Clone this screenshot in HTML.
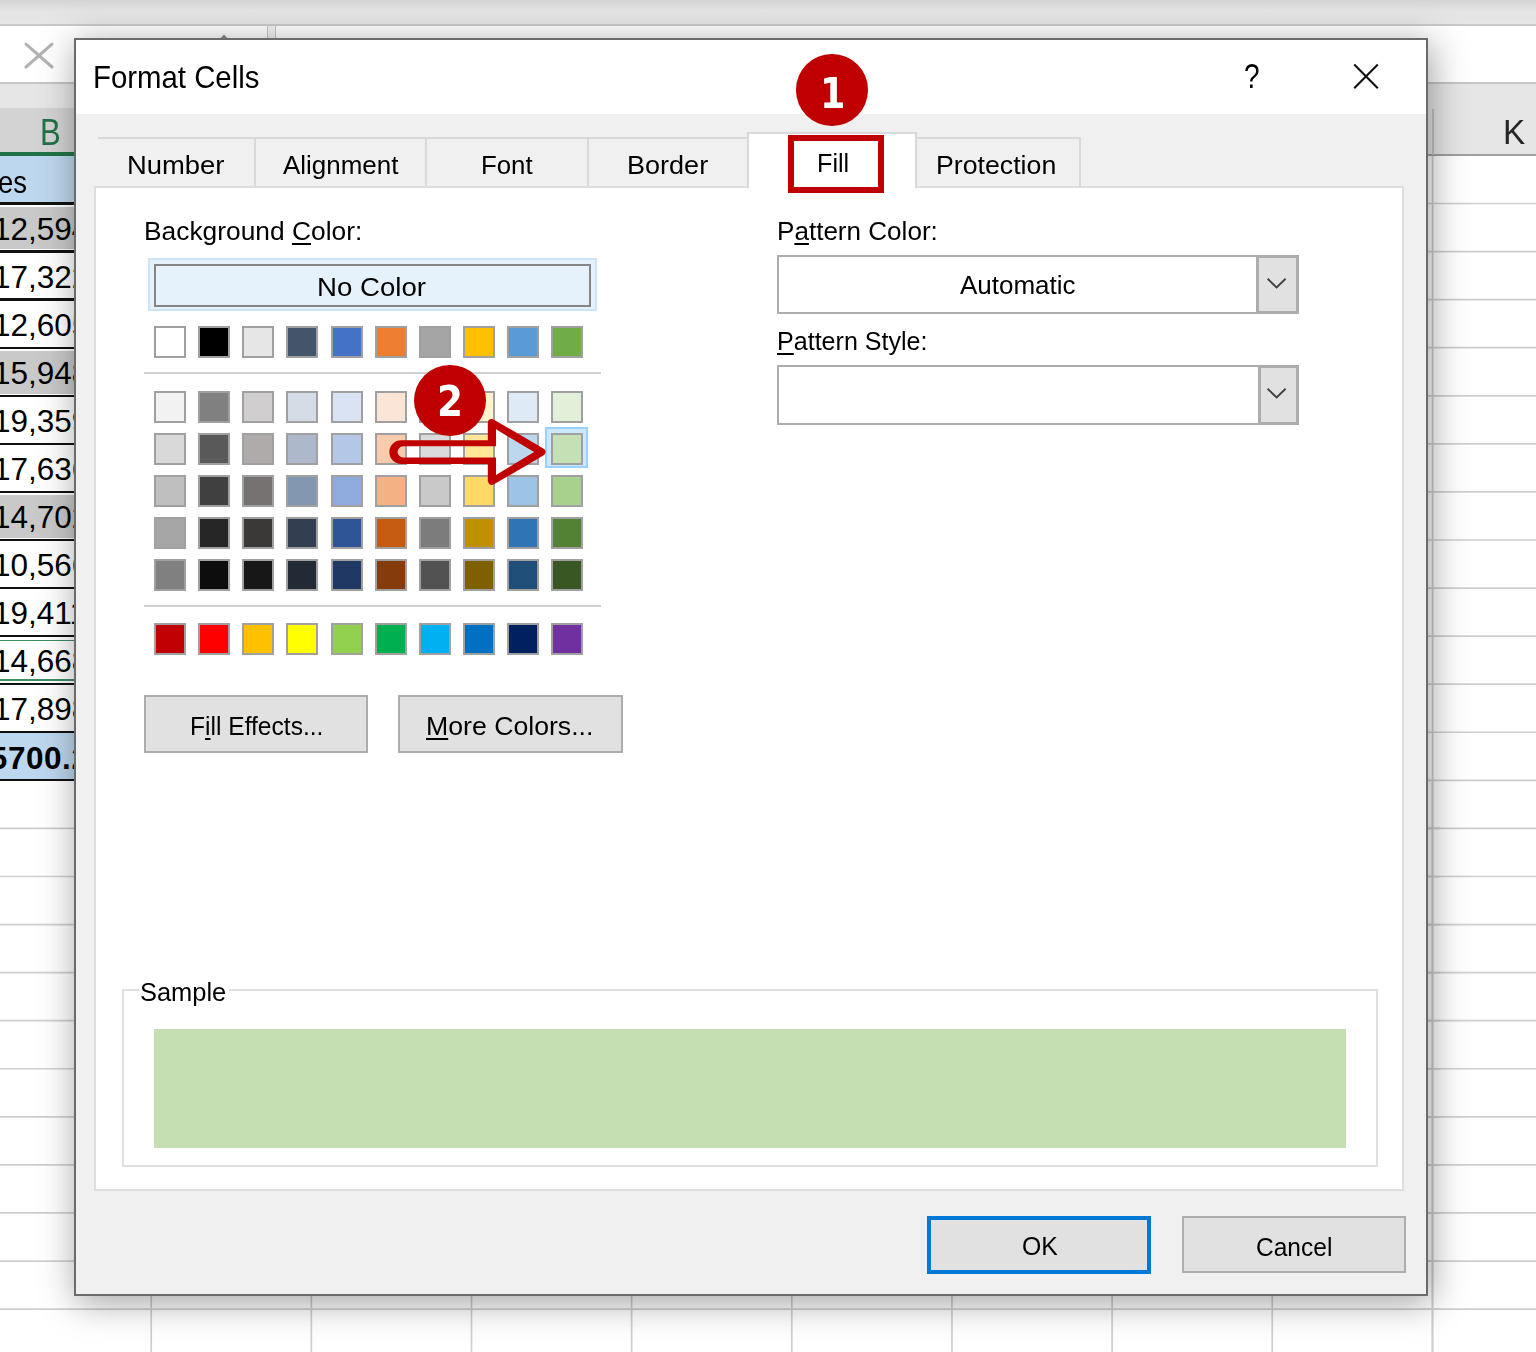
<!DOCTYPE html>
<html lang="en"><head><meta charset="utf-8"><title>Format Cells</title>
<style>
html,body{margin:0;padding:0}
body{width:1536px;height:1352px;position:relative;overflow:hidden;background:#fff;
 font-family:"Liberation Sans",sans-serif;color:#000}
.abs{position:absolute}
.tx{position:absolute;white-space:nowrap;transform-origin:0 0;display:block}
.tx u{text-decoration-thickness:2px;text-underline-offset:3px}
.gl{position:absolute;background:#d6d6d6}
.sw{position:absolute;width:28px;height:28px;border:2px solid #a0a0a0;display:block}
.btn{position:absolute;background:#e1e1e1;border:2px solid #adadad;box-sizing:border-box}
#dlg{position:absolute;left:74px;top:38px;width:1353.5px;height:1258px;box-sizing:border-box;
 border:2px solid #6b6b6b;background:#f0f0f0;box-shadow:3px 6px 34px 1px rgba(0,0,0,.36)}
</style></head><body>

<!-- ===== spreadsheet background ===== -->
<div class="abs" style="left:0;top:0;width:1536px;height:25px;background:linear-gradient(#d4d4d4,#e4e4e4 45%,#e6e6e6)"></div>
<div class="abs" style="left:0;top:24px;width:1536px;height:2px;background:#c9c9c9"></div>
<div class="abs" style="left:0;top:82px;width:1536px;height:74px;background:#e6e6e6"></div>
<div class="abs" style="left:0;top:82px;width:1536px;height:2px;background:#c6c6c6"></div>
<div class="abs" style="left:267px;top:26px;width:9px;height:56px;background:#f2f2f2;border-left:1.5px solid #c6c6c6;border-right:1.5px solid #c6c6c6;box-sizing:border-box"></div>
<svg class="abs" style="left:22px;top:38px" width="34" height="32" viewBox="0 0 34 32"><path d="M4 6.2 L30 29 M30 6.2 L4 29" stroke="#b2b2b2" stroke-width="3" fill="none" stroke-linecap="round"/></svg>
<svg class="abs" style="left:218px;top:32px" width="12" height="8" viewBox="0 0 12 8"><path d="M1.5 7.5 L6 2.6 L10.5 7.5 Z" fill="#8a8a8a"/></svg>
<div class="abs" style="left:0;top:108px;width:80px;height:45px;background:#d3d3d3"></div>
<div class="abs" style="left:1420px;top:154px;width:116px;height:2px;background:#9f9f9f"></div>
<div class="abs" style="left:1431.5px;top:109px;width:2px;height:46px;background:#c3c3c3"></div>
<svg class="abs" style="left:0;top:0" width="1536" height="1352" viewBox="0 0 1536 1352"><g stroke="#cfcfcf" stroke-width="1.7">
<path d="M1420 203.50H1536"/>
<path d="M1420 251.57H1536"/>
<path d="M1420 299.64H1536"/>
<path d="M1420 347.71H1536"/>
<path d="M1420 395.78H1536"/>
<path d="M1420 443.85H1536"/>
<path d="M1420 491.92H1536"/>
<path d="M1420 539.99H1536"/>
<path d="M1420 588.06H1536"/>
<path d="M1420 636.13H1536"/>
<path d="M1420 684.20H1536"/>
<path d="M1420 732.27H1536"/>
<path d="M1420 780.34H1536"/>
<path d="M1420 828.41H1536"/>
<path d="M0 828.41H1440"/>
<path d="M1420 876.48H1536"/>
<path d="M0 876.48H1440"/>
<path d="M1420 924.55H1536"/>
<path d="M0 924.55H1440"/>
<path d="M1420 972.62H1536"/>
<path d="M0 972.62H1440"/>
<path d="M1420 1020.69H1536"/>
<path d="M0 1020.69H1440"/>
<path d="M1420 1068.76H1536"/>
<path d="M0 1068.76H1440"/>
<path d="M1420 1116.83H1536"/>
<path d="M0 1116.83H1440"/>
<path d="M1420 1164.90H1536"/>
<path d="M0 1164.90H1440"/>
<path d="M1420 1212.97H1536"/>
<path d="M0 1212.97H1440"/>
<path d="M1420 1261.04H1536"/>
<path d="M0 1261.04H1440"/>
<path d="M1420 1309.11H1536"/>
<path d="M0 1309.11H1440"/>
<path d="M151.20 782V1352"/>
<path d="M311.35 782V1352"/>
<path d="M471.50 782V1352"/>
<path d="M631.65 782V1352"/>
<path d="M791.80 782V1352"/>
<path d="M951.95 782V1352"/>
<path d="M1112.10 782V1352"/>
<path d="M1272.25 782V1352"/>
<path d="M1432.40 782V1352"/>
<path d="M1432.6 156V1352"/>
</g></svg>
<div class="abs" style="left:0;top:155.0px;width:80px;height:47.8px;background:#bdd7ee"></div>
<div class="abs" style="left:0;top:202.3px;width:80px;height:2.4px;background:#111"></div>
<div class="abs" style="left:0;top:206.9px;width:80px;height:42.5px;background:#c9c9c9"></div>
<div class="abs" style="left:0;top:250.4px;width:80px;height:2.4px;background:#111"></div>
<div class="abs" style="left:0;top:298.4px;width:80px;height:2.4px;background:#111"></div>
<div class="abs" style="left:0;top:346.5px;width:80px;height:2.4px;background:#111"></div>
<div class="abs" style="left:0;top:351.1px;width:80px;height:42.5px;background:#c9c9c9"></div>
<div class="abs" style="left:0;top:394.6px;width:80px;height:2.4px;background:#111"></div>
<div class="abs" style="left:0;top:442.7px;width:80px;height:2.4px;background:#111"></div>
<div class="abs" style="left:0;top:490.7px;width:80px;height:2.4px;background:#111"></div>
<div class="abs" style="left:0;top:495.3px;width:80px;height:42.5px;background:#c9c9c9"></div>
<div class="abs" style="left:0;top:538.8px;width:80px;height:2.4px;background:#111"></div>
<div class="abs" style="left:0;top:586.9px;width:80px;height:2.4px;background:#111"></div>
<div class="abs" style="left:0;top:634.9px;width:80px;height:2.4px;background:#111"></div>
<div class="abs" style="left:0;top:683.0px;width:80px;height:2.4px;background:#111"></div>
<div class="abs" style="left:0;top:731.1px;width:80px;height:2.4px;background:#111"></div>
<div class="abs" style="left:0;top:732.5px;width:80px;height:47.2px;background:#bdd7ee"></div>
<div class="abs" style="left:0;top:779.1px;width:80px;height:2.4px;background:#111"></div>
<span id="c0" class="tx" style="left:-1.6px;top:166.98px;font-size:30.5px;line-height:30.5px;transform:scaleX(.9);">es</span>
<span id="c1" class="tx" style="left:-7.0px;top:213.54px;font-size:31.5px;line-height:31.5px;">12,594</span>
<span id="c2" class="tx" style="left:-7.0px;top:261.61px;font-size:31.5px;line-height:31.5px;">17,322</span>
<span id="c3" class="tx" style="left:-7.0px;top:309.68px;font-size:31.5px;line-height:31.5px;">12,605</span>
<span id="c4" class="tx" style="left:-7.0px;top:357.75px;font-size:31.5px;line-height:31.5px;">15,948</span>
<span id="c5" class="tx" style="left:-7.0px;top:405.82px;font-size:31.5px;line-height:31.5px;">19,359</span>
<span id="c6" class="tx" style="left:-7.0px;top:453.89px;font-size:31.5px;line-height:31.5px;">17,636</span>
<span id="c7" class="tx" style="left:-7.0px;top:501.96px;font-size:31.5px;line-height:31.5px;">14,702</span>
<span id="c8" class="tx" style="left:-7.0px;top:550.03px;font-size:31.5px;line-height:31.5px;">10,566</span>
<span id="c9" class="tx" style="left:-7.0px;top:598.10px;font-size:31.5px;line-height:31.5px;">19,411</span>
<span id="c10" class="tx" style="left:-7.0px;top:646.17px;font-size:31.5px;line-height:31.5px;">14,668</span>
<span id="c11" class="tx" style="left:-7.0px;top:694.24px;font-size:31.5px;line-height:31.5px;">17,898</span>
<span id="c12" class="tx" style="left:-10.2px;top:743.31px;font-size:31.5px;line-height:31.5px;font-weight:bold;letter-spacing:0.55px;">5700.2</span>
<div class="abs" style="left:0;top:152.4px;width:80px;height:3.8px;background:#217346"></div>
<div class="abs" style="left:0;top:640.2px;width:80px;height:1.3px;background:#3f8f63"></div>
<div class="abs" style="left:0;top:679.4px;width:80px;height:1.3px;background:#3f8f63"></div>
<span id="colB" class="tx" style="left:40.25px;top:114.50px;font-size:36.5px;line-height:36.5px;transform:scaleX(0.8500);color:#217346;">B</span>
<span id="colK" class="tx" style="left:1503.15px;top:114.17px;font-size:35.0px;line-height:35.0px;transform:scaleX(0.9500);color:#262626;">K</span>

<!-- ===== dialog ===== -->
<div id="dlg"></div>
<div class="abs" style="left:76px;top:40px;width:1349.5px;height:74.3px;background:#fff"></div>
<span id="title" class="tx" style="left:93.35px;top:60.91px;font-size:32.0px;line-height:32.0px;transform:scaleX(0.9175);">Format Cells</span>
<span id="q" class="tx" style="left:1244.00px;top:58.27px;font-size:35.0px;line-height:35.0px;transform:scaleX(0.8000);">?</span>
<svg class="abs" style="left:1350px;top:60px" width="32" height="32" viewBox="0 0 32 32"><path d="M4.2 4.6 L27.8 28.2 M27.8 4.6 L4.2 28.2" stroke="#111" stroke-width="2.1" fill="none"/></svg>

<!-- tabs -->
<div class="abs" style="left:98px;top:136.6px;width:651px;height:2px;background:#d9d9d9"></div>
<div class="abs" style="left:254.3px;top:137px;width:2px;height:50px;background:#d9d9d9"></div>
<div class="abs" style="left:424.6px;top:137px;width:2px;height:50px;background:#d9d9d9"></div>
<div class="abs" style="left:586.6px;top:137px;width:2px;height:50px;background:#d9d9d9"></div>
<div class="abs" style="left:916px;top:136.6px;width:165px;height:52px;border:2px solid #d9d9d9;border-left:none;border-bottom:none;box-sizing:border-box"></div>
<!-- panel -->
<div class="abs" style="left:94.2px;top:186.3px;width:1310px;height:1005px;background:#fff;border:2px solid #dedede;box-sizing:border-box"></div>
<!-- selected tab -->
<div class="abs" style="left:746.8px;top:131.6px;width:170.4px;height:56px;background:#fff;border:2px solid #d9d9d9;border-bottom:none;box-sizing:border-box"></div>
<div class="abs" style="left:748.8px;top:186px;width:166.4px;height:3px;background:#fff"></div>
<span id="t1" class="tx" style="left:126.74px;top:151.68px;font-size:26.6px;line-height:26.6px;transform:scaleX(1.0304);">Number</span>
<span id="t2" class="tx" style="left:283.00px;top:151.68px;font-size:26.6px;line-height:26.6px;transform:scaleX(0.9763);">Alignment</span>
<span id="t3" class="tx" style="left:481.06px;top:151.68px;font-size:26.6px;line-height:26.6px;transform:scaleX(0.9706);">Font</span>
<span id="t4" class="tx" style="left:627.47px;top:151.68px;font-size:26.6px;line-height:26.6px;transform:scaleX(1.0167);">Border</span>
<span id="t5" class="tx" style="left:816.51px;top:150.08px;font-size:26.6px;line-height:26.6px;transform:scaleX(0.9467);">Fill</span>
<span id="t6" class="tx" style="left:935.99px;top:151.68px;font-size:26.6px;line-height:26.6px;transform:scaleX(1.0043);">Protection</span>
<!-- red highlight around Fill -->
<div class="abs" style="left:788.3px;top:135px;width:95.8px;height:58.2px;border:6px solid #c00000;box-sizing:border-box"></div>

<!-- left column -->
<span id="bgc" class="tx" style="left:144.02px;top:218.08px;font-size:26.6px;line-height:26.6px;transform:scaleX(0.9907);">Background <u>C</u>olor:</span>
<div class="abs" style="left:148px;top:258px;width:448.5px;height:52.6px;background:#e5f1fb;border:2px solid #cce4f7;box-sizing:border-box"></div>
<div class="abs" style="left:153.6px;top:264.2px;width:437.2px;height:42.4px;border:2px solid #858585;box-sizing:border-box"></div>
<span id="noc" class="tx" style="left:317.22px;top:273.78px;font-size:26.6px;line-height:26.6px;transform:scaleX(1.0388);">No Color</span>
<div class="abs" style="left:144px;top:372.3px;width:457px;height:2px;background:#d0d0d0"></div>
<div class="abs" style="left:144px;top:604.5px;width:457px;height:2px;background:#d0d0d0"></div>
<!-- selected swatch halo -->
<div class="abs" style="left:544.8px;top:426.9px;width:43.6px;height:41.2px;background:#cce8ff;border:2px solid #99d1ff;box-sizing:border-box"></div>
<i class="sw" style="left:153.9px;top:326.3px;background:#FFFFFF"></i>
<i class="sw" style="left:198.1px;top:326.3px;background:#000000"></i>
<i class="sw" style="left:242.2px;top:326.3px;background:#E7E6E6"></i>
<i class="sw" style="left:286.4px;top:326.3px;background:#44546A"></i>
<i class="sw" style="left:330.6px;top:326.3px;background:#4472C4"></i>
<i class="sw" style="left:374.8px;top:326.3px;background:#ED7D31"></i>
<i class="sw" style="left:418.9px;top:326.3px;background:#A5A5A5"></i>
<i class="sw" style="left:463.1px;top:326.3px;background:#FFC000"></i>
<i class="sw" style="left:507.3px;top:326.3px;background:#5B9BD5"></i>
<i class="sw" style="left:551.4px;top:326.3px;background:#70AD47"></i>
<i class="sw" style="left:153.9px;top:390.6px;background:#F2F2F2"></i>
<i class="sw" style="left:198.1px;top:390.6px;background:#808080"></i>
<i class="sw" style="left:242.2px;top:390.6px;background:#D0CECE"></i>
<i class="sw" style="left:286.4px;top:390.6px;background:#D6DCE5"></i>
<i class="sw" style="left:330.6px;top:390.6px;background:#DAE3F3"></i>
<i class="sw" style="left:374.8px;top:390.6px;background:#FBE5D6"></i>
<i class="sw" style="left:418.9px;top:390.6px;background:#EDEDED"></i>
<i class="sw" style="left:463.1px;top:390.6px;background:#FFF2CC"></i>
<i class="sw" style="left:507.3px;top:390.6px;background:#DEEBF7"></i>
<i class="sw" style="left:551.4px;top:390.6px;background:#E2F0D9"></i>
<i class="sw" style="left:153.9px;top:432.8px;background:#D9D9D9"></i>
<i class="sw" style="left:198.1px;top:432.8px;background:#595959"></i>
<i class="sw" style="left:242.2px;top:432.8px;background:#AFABAB"></i>
<i class="sw" style="left:286.4px;top:432.8px;background:#ADB9CA"></i>
<i class="sw" style="left:330.6px;top:432.8px;background:#B4C7E7"></i>
<i class="sw" style="left:374.8px;top:432.8px;background:#F8CBAD"></i>
<i class="sw" style="left:418.9px;top:432.8px;background:#DBDBDB"></i>
<i class="sw" style="left:463.1px;top:432.8px;background:#FFE699"></i>
<i class="sw" style="left:507.3px;top:432.8px;background:#BDD7EE"></i>
<i class="sw" style="left:551.4px;top:432.8px;background:#C5E0B4"></i>
<i class="sw" style="left:153.9px;top:475.0px;background:#BFBFBF"></i>
<i class="sw" style="left:198.1px;top:475.0px;background:#404040"></i>
<i class="sw" style="left:242.2px;top:475.0px;background:#767171"></i>
<i class="sw" style="left:286.4px;top:475.0px;background:#8497B0"></i>
<i class="sw" style="left:330.6px;top:475.0px;background:#8FAADC"></i>
<i class="sw" style="left:374.8px;top:475.0px;background:#F4B183"></i>
<i class="sw" style="left:418.9px;top:475.0px;background:#C9C9C9"></i>
<i class="sw" style="left:463.1px;top:475.0px;background:#FFD966"></i>
<i class="sw" style="left:507.3px;top:475.0px;background:#9DC3E6"></i>
<i class="sw" style="left:551.4px;top:475.0px;background:#A9D18E"></i>
<i class="sw" style="left:153.9px;top:517.1px;background:#A6A6A6"></i>
<i class="sw" style="left:198.1px;top:517.1px;background:#262626"></i>
<i class="sw" style="left:242.2px;top:517.1px;background:#3B3838"></i>
<i class="sw" style="left:286.4px;top:517.1px;background:#333F50"></i>
<i class="sw" style="left:330.6px;top:517.1px;background:#2F5597"></i>
<i class="sw" style="left:374.8px;top:517.1px;background:#C55A11"></i>
<i class="sw" style="left:418.9px;top:517.1px;background:#7C7C7C"></i>
<i class="sw" style="left:463.1px;top:517.1px;background:#BF9000"></i>
<i class="sw" style="left:507.3px;top:517.1px;background:#2E75B6"></i>
<i class="sw" style="left:551.4px;top:517.1px;background:#548235"></i>
<i class="sw" style="left:153.9px;top:559.2px;background:#808080"></i>
<i class="sw" style="left:198.1px;top:559.2px;background:#0D0D0D"></i>
<i class="sw" style="left:242.2px;top:559.2px;background:#181717"></i>
<i class="sw" style="left:286.4px;top:559.2px;background:#222A35"></i>
<i class="sw" style="left:330.6px;top:559.2px;background:#203864"></i>
<i class="sw" style="left:374.8px;top:559.2px;background:#843C0C"></i>
<i class="sw" style="left:418.9px;top:559.2px;background:#525252"></i>
<i class="sw" style="left:463.1px;top:559.2px;background:#7F6000"></i>
<i class="sw" style="left:507.3px;top:559.2px;background:#1F4E79"></i>
<i class="sw" style="left:551.4px;top:559.2px;background:#385723"></i>
<i class="sw" style="left:153.9px;top:623.3px;background:#C00000"></i>
<i class="sw" style="left:198.1px;top:623.3px;background:#FF0000"></i>
<i class="sw" style="left:242.2px;top:623.3px;background:#FFC000"></i>
<i class="sw" style="left:286.4px;top:623.3px;background:#FFFF00"></i>
<i class="sw" style="left:330.6px;top:623.3px;background:#92D050"></i>
<i class="sw" style="left:374.8px;top:623.3px;background:#00B050"></i>
<i class="sw" style="left:418.9px;top:623.3px;background:#00B0F0"></i>
<i class="sw" style="left:463.1px;top:623.3px;background:#0070C0"></i>
<i class="sw" style="left:507.3px;top:623.3px;background:#002060"></i>
<i class="sw" style="left:551.4px;top:623.3px;background:#7030A0"></i>
<div class="btn" style="left:144px;top:695px;width:224.4px;height:58px"></div>
<div class="btn" style="left:398.2px;top:695px;width:224.6px;height:58px"></div>
<span id="fe" class="tx" style="left:189.65px;top:713.28px;font-size:26.6px;line-height:26.6px;transform:scaleX(0.9243);">F<u>i</u>ll Effects...</span>
<span id="mc" class="tx" style="left:426.00px;top:713.28px;font-size:26.6px;line-height:26.6px;transform:scaleX(1.0025);"><u>M</u>ore Colors...</span>

<!-- right column -->
<span id="pc" class="tx" style="left:777.24px;top:217.78px;font-size:26.6px;line-height:26.6px;transform:scaleX(0.9800);">P<u>a</u>ttern Color:</span>
<div class="abs" style="left:777px;top:254.7px;width:522.4px;height:59.4px;background:#fff;border:2px solid #adadad;box-sizing:border-box"></div>
<div class="abs" style="left:1255.8px;top:254.7px;width:43.6px;height:59.4px;background:#e1e1e1;border:3px solid #adadad;box-sizing:border-box"></div>
<svg class="abs" style="left:1264px;top:274px" width="26" height="20" viewBox="0 0 26 20"><path d="M3.6 4.8 L12.6 13.4 L21.6 4.8" stroke="#404040" stroke-width="1.9" fill="none"/></svg>
<span id="auto" class="tx" style="left:960.00px;top:271.98px;font-size:26.6px;line-height:26.6px;transform:scaleX(0.9771);">Automatic</span>
<span id="ps" class="tx" style="left:777.01px;top:327.88px;font-size:26.6px;line-height:26.6px;transform:scaleX(0.9426);"><u>P</u>attern Style:</span>
<div class="abs" style="left:777px;top:365.3px;width:522.4px;height:59.4px;background:#fff;border:2px solid #adadad;box-sizing:border-box"></div>
<div class="abs" style="left:1257.6px;top:365.3px;width:41.8px;height:59.4px;background:#e1e1e1;border:3px solid #adadad;box-sizing:border-box"></div>
<svg class="abs" style="left:1264px;top:384.4px" width="26" height="20" viewBox="0 0 26 20"><path d="M3.6 4.8 L12.6 13.4 L21.6 4.8" stroke="#404040" stroke-width="1.9" fill="none"/></svg>

<!-- sample -->
<div class="abs" style="left:122.4px;top:989.4px;width:1255.6px;height:177.8px;border:2px solid #e0e0e0;box-sizing:border-box"></div>
<div class="abs" style="left:139.4px;top:980px;width:89.4px;height:20px;background:#fff"></div>
<span id="smp" class="tx" style="left:139.89px;top:978.78px;font-size:26.6px;line-height:26.6px;transform:scaleX(0.9563);">Sample</span>
<div class="abs" style="left:154.2px;top:1029.4px;width:1191.5px;height:118.4px;background:#c5dfb3"></div>

<!-- OK / Cancel -->
<div class="abs" style="left:927px;top:1215.8px;width:224.3px;height:58px;background:#e1e1e1;border:4px solid #0078d7;box-sizing:border-box"></div>
<div class="btn" style="left:1181.6px;top:1216.3px;width:224.2px;height:57px"></div>
<span id="ok" class="tx" style="left:1021.57px;top:1233.28px;font-size:26.6px;line-height:26.6px;transform:scaleX(0.9324);">OK</span>
<span id="cancel" class="tx" style="left:1255.78px;top:1233.68px;font-size:26.6px;line-height:26.6px;transform:scaleX(0.9225);">Cancel</span>

<!-- annotations -->
<div class="abs" style="left:796.3px;top:54.4px;width:71.4px;height:71.4px;border-radius:50%;background:#c00000"></div>
<span id="b1" class="tx" style="left:819.6px;top:69.6px;font-family:'DejaVu Sans',sans-serif;font-weight:bold;font-size:42px;line-height:48px;color:#fff;transform:scaleX(.87)">1</span>
<svg class="abs" style="left:380px;top:410px" width="180" height="85" viewBox="380 410 180 85">
 <defs><mask id="am" maskUnits="userSpaceOnUse" x="380" y="410" width="180" height="85">
  <rect x="380" y="410" width="180" height="85" fill="#fff"/>
  <path d="M496 429.3 L534.1 452 L496 475 L496 457.5 L403.2 457.5 A5.6 5.6 0 0 1 403.2 446.3 L496 446.3 Z" fill="#000"/>
 </mask></defs>
 <g mask="url(#am)" fill="#c00000" stroke="#c00000">
  <path d="M491.9 423.2 L541.3 452 L491.9 480.8 Z" stroke-width="8.2" stroke-linejoin="round"/>
  <path d="M492 440.2 L401.2 440.2 A11.85 11.85 0 0 0 401.2 463.9 L492 463.9 Z" stroke="none"/>
 </g>
</svg>
<div class="abs" style="left:414.4px;top:364.6px;width:71.2px;height:71.2px;border-radius:50%;background:#c00000"></div>
<span id="b2" class="tx" style="left:436.6px;top:378.3px;font-family:'DejaVu Sans',sans-serif;font-weight:bold;font-size:42px;line-height:48px;color:#fff;transform:scaleX(.89)">2</span>
</body></html>
